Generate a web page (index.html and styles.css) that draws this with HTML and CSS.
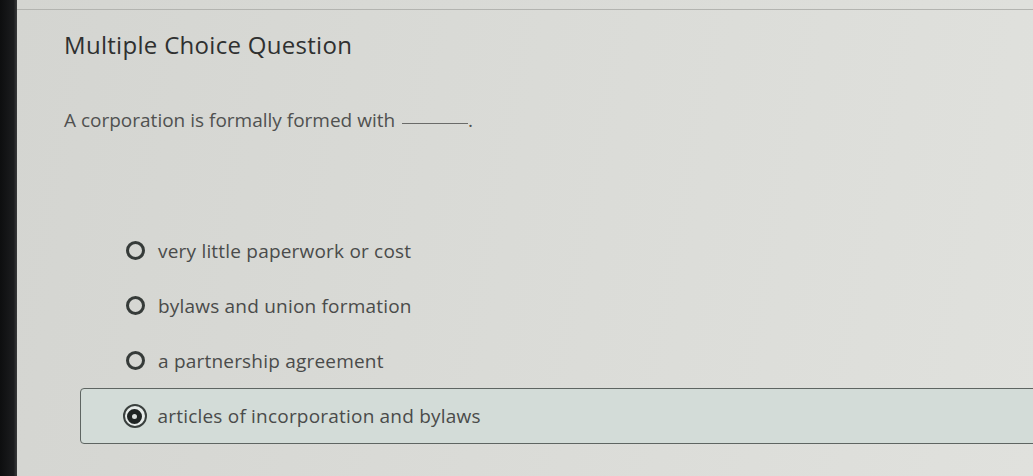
FILE: index.html
```html
<!DOCTYPE html>
<html lang="en">
<head>
<meta charset="utf-8">
<title>Multiple Choice Question</title>
<link rel="stylesheet" href="styles.css">
</head>
<body>
<div class="screen">
  <div class="bezel"></div>
  <main class="page">
    <div class="topbar"></div>
    <h1 class="title">Multiple Choice Question</h1>
    <p class="question">A corporation is formally formed with <span class="blank"></span>.</p>
    <ul class="options">
      <li class="option"><span class="radio-wrap"><span class="radio"></span></span><span class="label">very little paperwork or cost</span></li>
      <li class="option"><span class="radio-wrap"><span class="radio"></span></span><span class="label">bylaws and union formation</span></li>
      <li class="option"><span class="radio-wrap"><span class="radio"></span></span><span class="label">a partnership agreement</span></li>
      <li class="option selected"><span class="radio-wrap"><span class="radio checked"></span></span><span class="label">articles of incorporation and bylaws</span></li>
    </ul>
  </main>
</div>
</body>
</html>
```
FILE: styles.css
```css
html, body {
  margin: 0;
  padding: 0;
  height: 100%;
  overflow: hidden;
}
body {
  font-family: "Open Sans", Lato, "Liberation Sans", sans-serif;
  background: #d8d9d5;
}
.screen {
  display: flex;
  height: 476px;
}
.bezel {
  width: 17px;
  flex: none;
  background: linear-gradient(to right, #0d0e0f 0%, #1b1c1e 80%, #3a3b3c 100%);
}
.page {
  flex: 1;
  min-width: 0;
  background: linear-gradient(100deg, #d4d5d1 0%, #d9dad6 40%, #e0e1dd 100%);
}
.topbar {
  height: 9px;
  border-bottom: 1px solid #b3b4b0;
}
.title {
  margin: 19px 0 0 47px;
  font-size: 24px;
  line-height: 32px;
  font-weight: 400;
  color: #2f3030;
  letter-spacing: 0.3px;
}
.question {
  margin: 46px 0 0 47px;
  font-size: 19px;
  line-height: 26px;
  color: #505150;
}
.blank {
  display: inline-block;
  width: 66px;
  border-bottom: 1px solid #6a6b69;
  margin-left: 2px;
  vertical-align: 3px;
}
.options {
  list-style: none;
  margin: 90px 0 0 63px;
  padding: 0;
}
.option {
  display: flex;
  align-items: center;
  height: 55px;
  padding-left: 43px;
  box-sizing: border-box;
}
.radio-wrap {
  width: 24px;
  height: 24px;
  flex: none;
  display: flex;
  align-items: center;
  justify-content: center;
  margin-right: 11px;
}
.radio {
  width: 19px;
  height: 19px;
  box-sizing: border-box;
  border: 3px solid #363b39;
  border-radius: 50%;
}
.radio.checked {
  width: 24px;
  height: 24px;
  border: 2px solid #3a403e;
  background: #e6ebe9;
  display: flex;
  align-items: center;
  justify-content: center;
}
.radio.checked::after {
  content: "";
  width: 15px;
  height: 15px;
  box-sizing: border-box;
  border-radius: 50%;
  border: 5px solid #1f2423;
  background: #d9dedc;
}
.label {
  font-size: 19px;
  color: #4a4b4a;
  line-height: 26px;
  letter-spacing: 0.2px;
}
.option.selected {
  height: 56px;
  margin-right: -10px;
  background: #d3dcd8;
  border: 1.5px solid #5e6562;
  border-radius: 4px;
  padding-left: 41.5px;
}
```
